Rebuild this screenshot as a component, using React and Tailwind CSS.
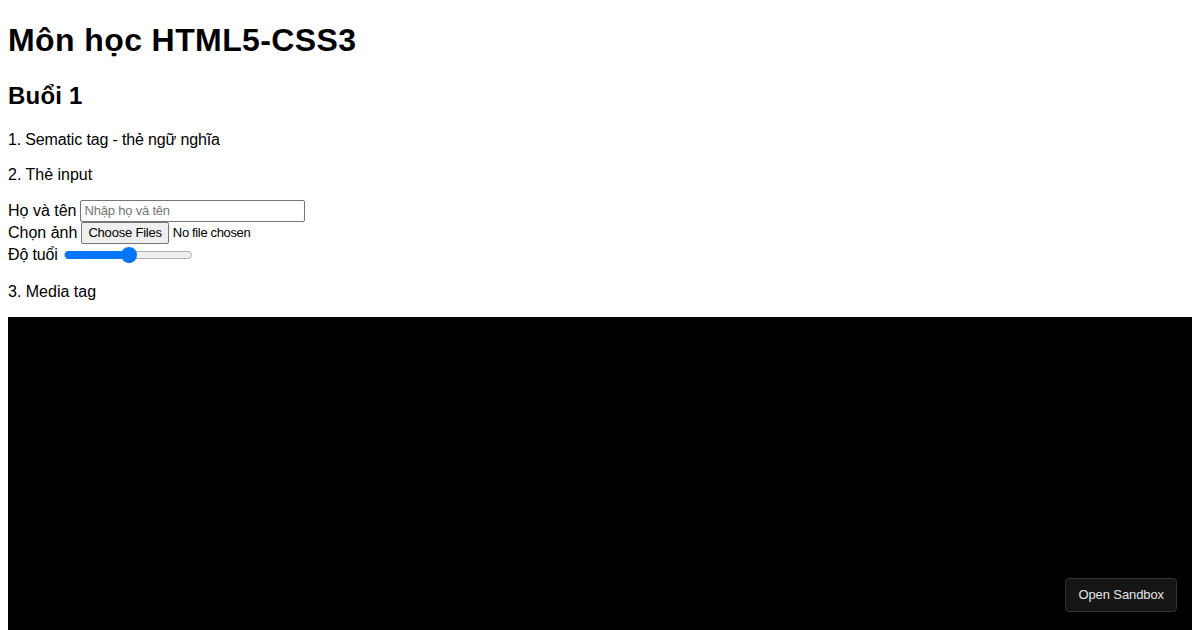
export default function App() {
  return (
    <div className="min-h-[630px] bg-white text-black font-['Liberation_Sans',Arial,sans-serif] px-2 overflow-hidden h-[630px] relative">
      <h1 className="pt-[22px] text-[32px] font-bold leading-[37px] tracking-[0.4px]">Môn học HTML5-CSS3</h1>
      <h2 className="mt-[23px] text-[24px] font-bold leading-[28px] tracking-[0.2px]">Buổi 1</h2>
      <p className="mt-[21px] text-[16px] leading-[18px] tracking-[-0.15px]">1. Sematic tag - thẻ ngữ nghĩa</p>
      <p className="mt-[17px] text-[16px] leading-[18px]">2. Thẻ input</p>

      <div className="mt-4 text-[16px] leading-[22px]">
        <div className="flex items-center h-[22px]">
          <span>Họ và tên</span>
          <div className="ml-[4px] w-[225px] h-[22px] border border-[#767676] rounded-[2px] px-[3px] flex items-center text-[13px] text-[#757575] tracking-[-0.2px]">
            Nhập họ và tên
          </div>
        </div>
        <div className="flex items-center h-[22px]">
          <span>Chọn ảnh</span>
          <div className="ml-[4px] h-[22px] px-[6px] border border-[#767676] rounded-[2px] bg-[#efefef] flex items-center text-[13px] tracking-[-0.2px]">
            Choose Files
          </div>
          <span className="ml-[4px] text-[13px] tracking-[-0.35px]">No file chosen</span>
        </div>
        <div className="flex items-center h-[22px]">
          <span className="tracking-[-0.15px]">Độ tuổi</span>
          <div className="ml-[6px] relative w-[128px] h-[8px] rounded-full border border-[#b2b2b2] bg-[#efefef]">
            <div className="absolute left-0 top-[-1px] h-[8px] w-[66px] rounded-full bg-[#0075ff]" />
            <div className="absolute left-[56px] top-[-5px] w-[16px] h-[16px] rounded-full bg-[#0075ff]" />
          </div>
        </div>
      </div>

      <p className="mt-[17px] text-[16px] leading-[18px]">3. Media tag</p>

      <div className="mt-4 w-full h-[400px] bg-black" />

      <button className="absolute right-[23px] bottom-[18px] h-[34px] px-[12px] rounded-[4px] bg-[#151515] border border-[#343434] text-[#e5e5e5] text-[13px] tracking-[-0.1px] font-['Liberation_Sans',sans-serif]">
        Open Sandbox
      </button>
    </div>
  );
}
